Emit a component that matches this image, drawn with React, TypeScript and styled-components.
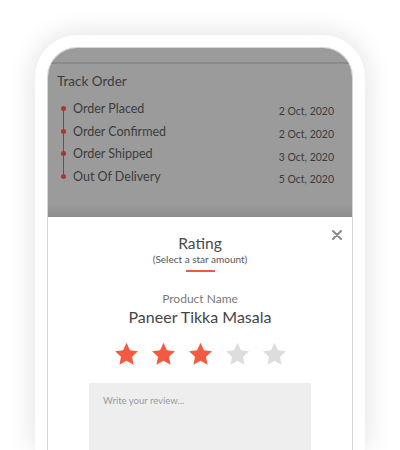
import styled, { createGlobalStyle } from 'styled-components'

const GlobalStyle = createGlobalStyle`
  html, body {
    margin: 0;
    padding: 0;
    height: 450px;
    overflow: hidden;
    background: #ffffff;
    font-family: Lato, 'Noto Sans', sans-serif;
  }
`

interface Step {
    label: string
    date: string
}

const steps: Step[] = [
    { label: 'Order Placed', date: '2 Oct, 2020' },
    { label: 'Order Confirmed', date: '2 Oct, 2020' },
    { label: 'Order Shipped', date: '3 Oct, 2020' },
    { label: 'Out Of Delivery', date: '5 Oct, 2020' },
]

function Star({ filled }: { filled: boolean }): JSX.Element {
    return <svg width='25' height='24' viewBox='0 0 24 23'>
        <path
            d='M12 0.8l3.3 7.1 7.7 0.9-5.7 5.3 1.5 7.7L12 17.9l-6.8 3.9 1.5-7.7L1 8.8l7.7-0.9z'
            fill={filled ? '#f45a42' : '#dddddd'}
        />
    </svg>
}

export default function App(): JSX.Element {
    const rating = 3
    return <Page>
        <GlobalStyle />
        <Phone>
            <Screen>
                <Backdrop>
                    <TopStrip />
                    <Divider />
                    <Track>
                        <TrackTitle>Track Order</TrackTitle>
                        <Timeline>
                            {steps.map((step, index) => (
                                <StepRow key={index} first={index === 0} last={index === steps.length - 1}>
                                    <Dot />
                                    <StepLabel>{step.label}</StepLabel>
                                    <StepDate>{step.date}</StepDate>
                                </StepRow>
                            ))}
                        </Timeline>
                    </Track>
                </Backdrop>
                <Modal>
                    <Close aria-label='close'>
                        <svg width='10' height='10' viewBox='0 0 10 10'>
                            <path d='M1 1L9 9M9 1L1 9' stroke='#8a8a8a' strokeWidth='2' strokeLinecap='round' />
                        </svg>
                    </Close>
                    <Heading>Rating</Heading>
                    <SubHeading>(Select a star amount)</SubHeading>
                    <Accent />
                    <ProductLabel>Product Name</ProductLabel>
                    <ProductName>Paneer Tikka Masala</ProductName>
                    <Stars>
                        {[1, 2, 3, 4, 5].map(n => <Star key={n} filled={n <= rating} />)}
                    </Stars>
                    <Review placeholder='Write your review...' />
                </Modal>
            </Screen>
        </Phone>
    </Page>
}

const Page = styled.div`
    padding: 35px 35px 0 35px;
`

const Phone = styled.div`
    width: 330px;
    height: 415px;
    box-sizing: border-box;
    background: #ffffff;
    border-radius: 42px 42px 0 0;
    box-shadow: 0 0 28px rgba(0, 0, 0, 0.13);
    padding: 12px 12px 0 12px;
`

const Screen = styled.div`
    height: 100%;
    border-radius: 30px 30px 0 0;
    border: 1.5px solid #d5d5de;
    border-bottom: none;
    overflow: hidden;
    display: flex;
    flex-direction: column;
    background: #ffffff;
`

const Backdrop = styled.div`
    height: 169px;
    flex-shrink: 0;
    display: flex;
    flex-direction: column;
    background: linear-gradient(to bottom, #9b9b9b 0, #9b9b9b 156px, #8b8b8b 169px);
`

const TopStrip = styled.div`
    height: 14px;
`

const Divider = styled.div`
    height: 2px;
    background: #8a8a8a;
`

const Track = styled.div`
    padding: 8px 18px 0 9px;
`

const TrackTitle = styled.div`
    font-size: 13.5px;
    line-height: 18px;
    color: #3b3b3b;
    margin-bottom: 7px;
`

const Timeline = styled.div`
    display: flex;
    flex-direction: column;
`

const StepRow = styled.div<{ first: boolean; last: boolean }>`
    position: relative;
    display: flex;
    align-items: center;
    height: 22.7px;
    padding-left: 16px;
    &::before {
        content: '';
        position: absolute;
        left: 5.5px;
        width: 1px;
        background: #a7382a;
        top: ${p => (p.first ? '50%' : '0')};
        bottom: ${p => (p.last ? '50%' : '0')};
    }
`

const Dot = styled.span`
    position: absolute;
    left: 3.5px;
    top: 50%;
    width: 5px;
    height: 5px;
    margin-top: -2.5px;
    border-radius: 50%;
    background: #a9382a;
`

const StepLabel = styled.span`
    flex: 1;
    font-size: 12.5px;
    color: #3b3b3b;
`

const StepDate = styled.span`
    font-size: 10.5px;
    color: #3b3b3b;
    padding-top: 6px;
`

const Modal = styled.div`
    position: relative;
    flex: 1;
    background: #ffffff;
    display: flex;
    flex-direction: column;
    align-items: center;
    padding-top: 16px;
`

const Close = styled.button`
    position: absolute;
    top: 13px;
    right: 10px;
    border: none;
    background: none;
    padding: 0;
    display: flex;
`

const Heading = styled.div`
    font-size: 15.5px;
    line-height: 20px;
    color: #4a4a4a;
`

const SubHeading = styled.div`
    font-size: 10px;
    line-height: 12px;
    color: #555555;
`

const Accent = styled.div`
    width: 29px;
    height: 2px;
    background: #f05a3c;
    margin-top: 5px;
`

const ProductLabel = styled.div`
    margin-top: 19px;
    font-size: 12px;
    line-height: 16px;
    color: #7a7a7a;
`

const ProductName = styled.div`
    margin-top: 0;
    font-size: 16px;
    line-height: 20px;
    color: #454545;
`

const Stars = styled.div`
    display: flex;
    gap: 12px;
    margin-top: 15px;
`

const Review = styled.textarea`
    margin-top: 17px;
    width: 222px;
    height: 90px;
    box-sizing: border-box;
    border: none;
    border-radius: 2px;
    background: #eeeeee;
    padding: 12px 14px;
    resize: none;
    font-family: Lato, 'Noto Sans', sans-serif;
    font-size: 9.5px;
    &::placeholder {
        color: #9a9a9a;
    }
`
